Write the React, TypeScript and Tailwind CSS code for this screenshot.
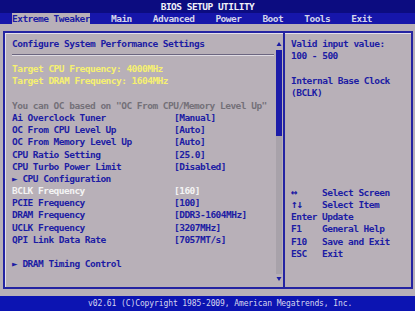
import React from 'react';

const rows: { label: string; value?: string; tone?: 'blue' | 'white' | 'gray' | 'yellow' }[] = [
  { label: 'Target CPU Frequency: 4000MHz', tone: 'yellow' },
  { label: 'Target DRAM Frequency: 1604MHz', tone: 'yellow' },
  { label: '' },
  { label: 'You can OC based on "OC From CPU/Memory Level Up"', tone: 'gray' },
  { label: 'Ai Overclock Tuner', value: '[Manual]' },
  { label: 'OC From CPU Level Up', value: '[Auto]' },
  { label: 'OC From Memory Level Up', value: '[Auto]' },
  { label: 'CPU Ratio Setting', value: '[25.0]' },
  { label: 'CPU Turbo Power Limit', value: '[Disabled]' },
  { label: '\u25BA CPU Configuration' },
  { label: 'BCLK Frequency', value: '[160]', tone: 'white' },
  { label: 'PCIE Frequency', value: '[100]' },
  { label: 'DRAM Frequency', value: '[DDR3-1604MHz]' },
  { label: 'UCLK Frequency', value: '[3207MHz]' },
  { label: 'QPI Link Data Rate', value: '[7057MT/s]' },
  { label: '' },
  { label: '\u25BA DRAM Timing Control' },
];

const toneClass = {
  blue: 'text-[#1c1ca4]',
  white: 'text-[#f4f4f4]',
  gray: 'text-[#747078]',
  yellow: 'text-[#f6f070]',
};

const keys = [
  ['\u2194', 'Select Screen', true],
  ['\u2191\u2193', 'Select Item', true],
  ['Enter', 'Update', false],
  ['F1', 'General Help', false],
  ['F10', 'Save and Exit', false],
  ['ESC', 'Exit', false],
] as const;

const tabs = ['Main', 'Advanced', 'Power', 'Boot', 'Tools', 'Exit'];

export default function App() {
  return (
    <div className="w-[415px] h-[311px] bg-[#b8b0b8] flex flex-col overflow-hidden font-['DejaVu_Sans_Mono','Liberation_Mono',monospace] font-bold text-[9.5px] tracking-[-0.52px] leading-[12.2px] whitespace-pre">
      {/* title */}
      <div className="h-[13px] bg-[#0c0c80] text-[#f0f0f8] text-center leading-[13px]">BIOS SETUP UTILITY</div>

      {/* tabs */}
      <div className="h-[11px] bg-[#1616aa] flex gap-[21px] pl-[12px] leading-[11px] text-[#d4d4ec]">
        <span className="bg-[#b8b0b8] text-[#1c1ca4]">Extreme Tweaker</span>
        {tabs.map(t => (
          <span key={t}>{t}</span>
        ))}
      </div>

      {/* body */}
      <div className="flex-1 pt-[7px] pb-[7px] pl-[3px] pr-[2px]">
        <div className="h-full flex border-2 border-[#2424a2] shadow-[inset_1px_1px_0_#e4e0ea]">
          {/* left panel */}
          <div className="w-[280px] flex border-r-2 border-[#2424a2]">
            <div className="flex-1 pl-[7px] pt-[5px]">
              <div className="text-[#1c1ca4]">Configure System Performance Settings</div>
              <div className="mt-[4px] mr-[2px] h-[2px] border-t border-[#6c6680] border-b border-b-[#e0dce4]" />
              <div className="mt-[7px]">
                {rows.map((r, i) => (
                  <div key={i} className={`flex h-[12.2px] ${toneClass[r.tone ?? 'blue']}`}>
                    <span className="w-[162px]">{r.label}</span>
                    {r.value && <span>{r.value}</span>}
                  </div>
                ))}
              </div>
            </div>
            {/* scrollbar */}
            <div className="w-[6px] mr-[1px] mt-[6px] mb-[5px] flex flex-col items-center">
              <svg width="6" height="6" viewBox="0 0 6 6" className="mt-[2px]">
                <path d="M3 1 L5.5 5 L0.5 5 Z" fill="#1c1ca4" />
              </svg>
              <div className="w-[6px] h-[86px] bg-[#1c1ca8] mt-[3px]" />
              <div className="w-[6px] flex-1 bg-[#a8a2aa]" />
              <svg width="6" height="6" viewBox="0 0 6 6" className="mt-[2px]">
                <path d="M0.5 1 L5.5 1 L3 5 Z" fill="#1c1ca4" />
              </svg>
            </div>
          </div>

          {/* right panel */}
          <div className="flex-1 pl-[6px] pt-[5px] pb-[27px] flex flex-col justify-between text-[#1c1ca4]">
            <div>
              <div>Valid input value:</div>
              <div>100 - 500</div>
              <div className="h-[12.2px]" />
              <div>Internal Base Clock</div>
              <div>(BCLK)</div>
            </div>
            <div>
              {keys.map(([k, d, arrow]) => (
                <div key={k} className="flex h-[12.2px]">
                  <span className={arrow ? 'w-[31px] text-[11px] tracking-[-1px] leading-[12.2px]' : 'w-[31px]'}>{k}</span>
                  <span>{d}</span>
                </div>
              ))}
            </div>
          </div>
        </div>
      </div>

      {/* footer */}
      <div className="h-[15px] bg-[#0c14b2] text-[#d6d6ee] pl-[88px] text-[8px] tracking-[-0.1px] font-normal leading-[15px]">
        v02.61 (C)Copyright 1985-2009, American Megatrends, Inc.
      </div>
    </div>
  );
}
